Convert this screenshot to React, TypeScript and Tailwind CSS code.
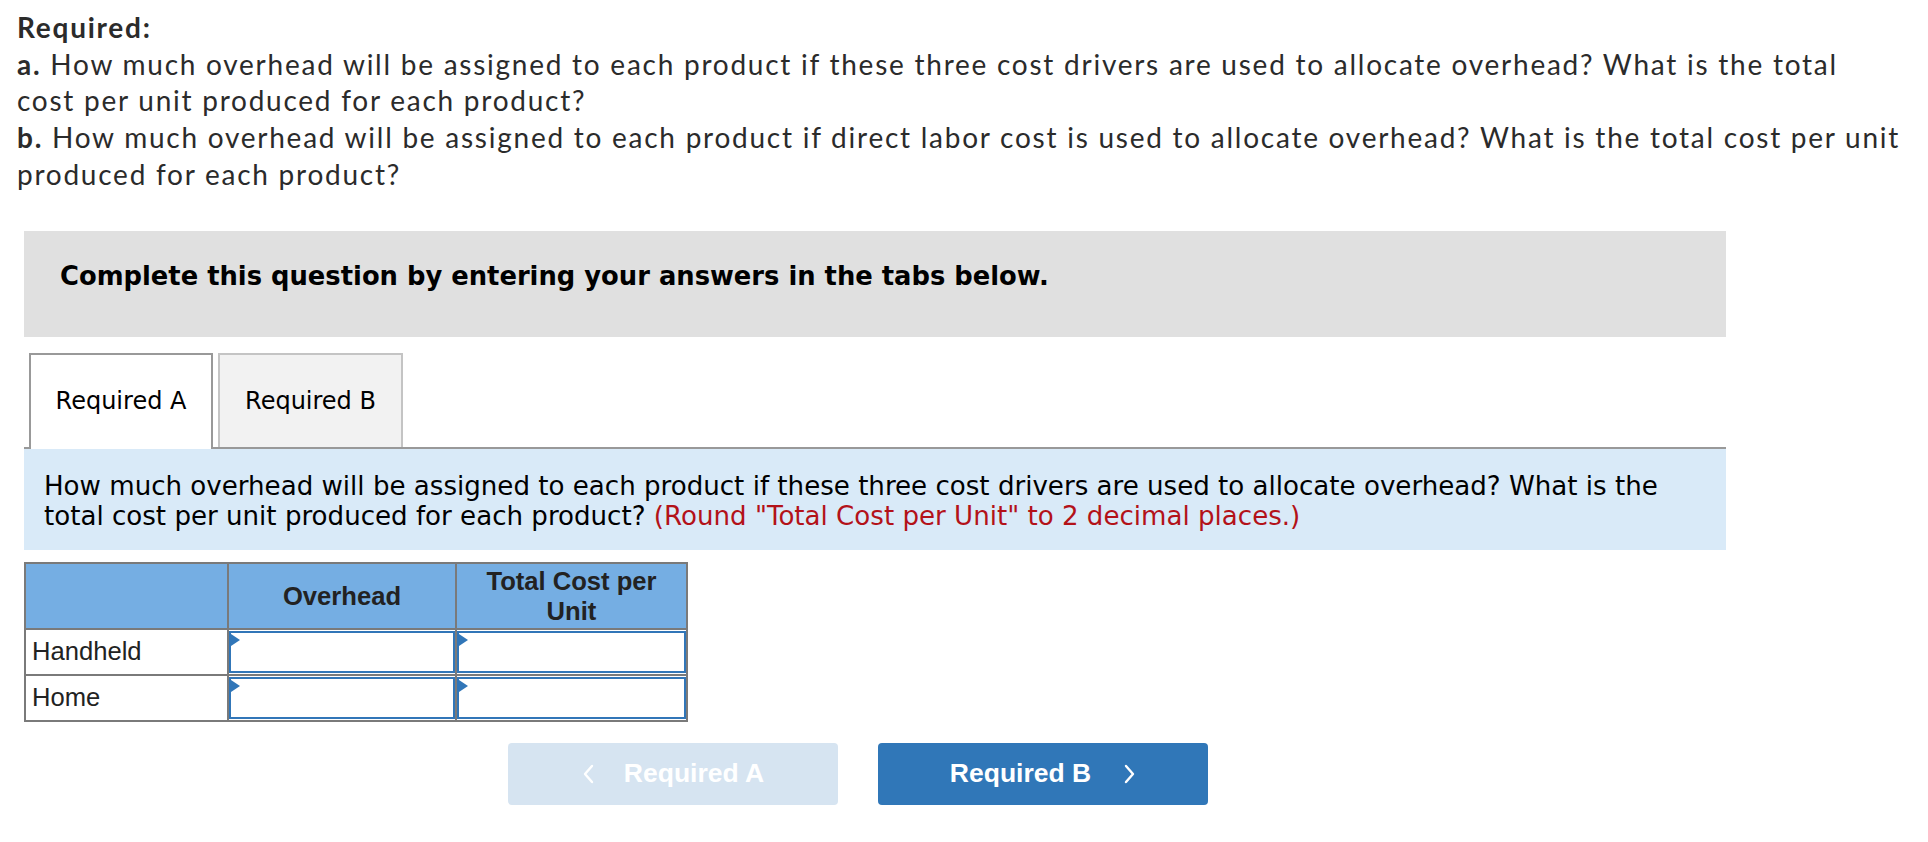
import React from "react";

const proxima = { fontFamily: "Lato, 'Open Sans', sans-serif" };

function Chevron({ dir }: { dir: "left" | "right" }) {
  return (
    <svg width="12" height="20" viewBox="0 0 12 20" fill="none" className="shrink-0">
      {dir === "left" ? (
        <polyline points="10,2 3,10 10,18" stroke="currentColor" strokeWidth="2.4" strokeLinecap="round" strokeLinejoin="round" />
      ) : (
        <polyline points="2,2 9,10 2,18" stroke="currentColor" strokeWidth="2.4" strokeLinecap="round" strokeLinejoin="round" />
      )}
    </svg>
  );
}

function InputCell() {
  return (
    <td className="p-0 border-2 border-[#7a7a7a] h-[46px]">
      <div className="relative h-[42px] border-2 border-[#3176b8] bg-white">
        <div className="absolute left-0 top-[1px] w-0 h-0 border-y-[6px] border-y-transparent border-l-[9px] border-l-[#3176b8]" />
      </div>
    </td>
  );
}

export default function App() {
  return (
    <div className="min-h-screen w-full bg-white">
      <div
        className="pl-[17px] pt-[9px] text-[28px] leading-[36.7px] tracking-[1.75px] text-[#2b2b2b] whitespace-nowrap"
        style={proxima}
      >
        <div className="font-bold">Required:</div>
        <div>
          <span className="font-bold">a.</span> How much overhead will be assigned to each product if these three cost drivers are used to allocate overhead? What is the total
        </div>
        <div>cost per unit produced for each product?</div>
        <div>
          <span className="font-bold">b.</span> How much overhead will be assigned to each product if direct labor cost is used to allocate overhead? What is the total cost per unit
        </div>
        <div>produced for each product?</div>
      </div>

      <div className="ml-[24px] w-[1702px] mt-[38px]" style={{ fontFamily: "'DejaVu Sans', Verdana, sans-serif" }}>
        <div className="h-[106px] bg-[#e0e0e0] pl-[36px] pt-[29px] text-[25.8px] leading-[32px] font-bold text-black">
          Complete this question by entering your answers in the tabs below.
        </div>

        <div className="mt-[16px] flex items-start gap-[5px] pl-[5px] border-b-2 border-[#999999]">
          <div className="relative z-10 -mb-[2px] w-[184px] h-[96px] border-2 border-b-0 border-[#999999] bg-white flex items-center justify-center text-[24px] text-black">
            <span className="-mt-[2px]">Required A</span>
          </div>
          <div className="w-[185px] h-[94px] border-2 border-b-0 border-[#c4c4c4] bg-[#f2f2f2] flex items-center justify-center text-[24px] text-black">
            Required B
          </div>
        </div>

        <div className="h-[101px] bg-[#d9eaf8] pl-[20px] pt-[22px] text-[26.1px] leading-[30.7px] text-black whitespace-nowrap">
          <div>How much overhead will be assigned to each product if these three cost drivers are used to allocate overhead? What is the</div>
          <div>
            total cost per unit produced for each product?{" "}
            <span className="text-[#b31219]">(Round "Total Cost per Unit" to 2 decimal places.)</span>
          </div>
        </div>
      </div>

      <div className="ml-[24px] mt-[12px]" style={{ fontFamily: "'Liberation Sans', Arial, sans-serif" }}>
        <table className="border-collapse w-[662px] table-fixed text-[25.6px] text-[#222222]">
          <colgroup>
            <col className="w-[203px]" />
            <col className="w-[228px]" />
            <col className="w-[231px]" />
          </colgroup>
          <thead>
            <tr className="h-[66px] bg-[#75aee3]">
              <th className="border-2 border-[#7a7a7a]"></th>
              <th className="border-2 border-[#7a7a7a] font-bold text-center leading-[30px]">Overhead</th>
              <th className="border-2 border-[#7a7a7a] font-bold text-center leading-[30px]">
                Total Cost per
                <br />
                Unit
              </th>
            </tr>
          </thead>
          <tbody>
            <tr className="h-[46px]">
              <td className="border-2 border-[#7a7a7a] pl-[6px] bg-white">Handheld</td>
              <InputCell />
              <InputCell />
            </tr>
            <tr className="h-[46px]">
              <td className="border-2 border-[#7a7a7a] pl-[6px] bg-white">Home</td>
              <InputCell />
              <InputCell />
            </tr>
          </tbody>
        </table>
      </div>

      <div className="ml-[508px] mt-[21px] flex gap-[40px] pb-[37px]" style={{ fontFamily: "'Liberation Sans', Arial, sans-serif" }}>
        <div className="w-[330px] h-[62px] rounded-[4px] bg-[#d6e4f1] text-white flex items-center justify-center gap-[30px] text-[26.5px] font-bold">
          <Chevron dir="left" />
          <span>Required A</span>
        </div>
        <div className="w-[330px] h-[62px] rounded-[4px] bg-[#3077b8] text-white flex items-center justify-center gap-[33px] text-[26.5px] font-bold">
          <span>Required B</span>
          <Chevron dir="right" />
        </div>
      </div>
    </div>
  );
}
